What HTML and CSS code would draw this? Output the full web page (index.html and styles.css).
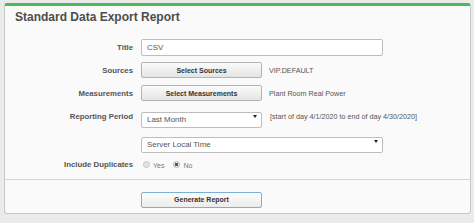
FILE: index.html
```html
<!DOCTYPE html>
<html>
<head>
<meta charset="utf-8">
<link rel="stylesheet" href="styles.css">
</head>
<body>
<div class="panel">
  <h1 class="panel-title">Standard Data Export Report</h1>
  <form class="form">
    <div class="field">
      <label class="label">Title</label>
      <input class="input input-wide" type="text" value="CSV">
    </div>
    <div class="field">
      <label class="label">Sources</label>
      <div class="control">
        <button type="button" class="btn">Select Sources</button>
        <span class="value">VIP.DEFAULT</span>
      </div>
    </div>
    <div class="field">
      <label class="label">Measurements</label>
      <div class="control">
        <button type="button" class="btn">Select Measurements</button>
        <span class="value">Plant Room Real Power</span>
      </div>
    </div>
    <div class="field">
      <label class="label">Reporting Period</label>
      <div class="control">
        <div class="select"><select><option>Last Month</option></select></div>
        <span class="value value-date">[start of day 4/1/2020 to end of day 4/30/2020]</span>
      </div>
    </div>
    <div class="field field-spaced">
      <span class="label"></span>
      <div class="select select-wide"><select><option>Server Local Time</option></select></div>
    </div>
    <div class="field">
      <label class="label">Include Duplicates</label>
      <div class="radios">
        <label class="radio"><input type="radio" name="dup"><span>Yes</span></label>
        <label class="radio"><input type="radio" name="dup" checked><span>No</span></label>
      </div>
    </div>
  </form>
  <div class="footer">
    <button type="button" class="btn btn-primary">Generate Report</button>
  </div>
</div>
</body>
</html>
```
FILE: styles.css
```css
html, body {
  margin: 0;
  padding: 0;
  background: #ebebeb;
  font-family: "Liberation Sans", Arial, sans-serif;
}

body {
  padding: 3px 3px 0 4px;
}

.panel {
  background: #fafafa;
  border: 1px solid #c8c8c8;
  border-top: 3px solid #4cb85a;
  border-radius: 3px;
  height: 207px;
  box-sizing: content-box;
}

.panel-title {
  margin: 0;
  padding: 4px 10px 0;
  font-size: 12px;
  line-height: 14px;
  font-weight: bold;
  color: #4d4d4d;
}

.form {
  display: flex;
  flex-direction: column;
  gap: 7px;
  margin-top: 15px;
  padding-bottom: 7px;
  border-bottom: 1px solid #d6d6d6;
}

.field {
  display: grid;
  grid-template-columns: 128px auto;
  column-gap: 8px;
  align-items: center;
  height: 16px;
}

.field-spaced {
  margin-top: 2px;
}

.label {
  text-align: right;
  font-size: 7.8px;
  font-weight: bold;
  color: #555;
}

.control {
  display: flex;
  align-items: center;
  gap: 7px;
}

.input {
  box-sizing: border-box;
  height: 17px;
  margin: 0;
  padding: 0 5px;
  border: 1px solid #bdbdbd;
  border-radius: 2px;
  background: #fff;
  font-family: inherit;
  font-size: 7.9px;
  color: #555;
  outline: none;
}

.input-wide {
  width: 242px;
}

.btn {
  box-sizing: border-box;
  width: 121px;
  height: 16px;
  margin: 0;
  padding: 0;
  border: 1px solid #b4b4b4;
  border-radius: 2px;
  background: linear-gradient(#fbfbfb, #e4e4e4);
  font-family: inherit;
  font-size: 7px;
  font-weight: bold;
  color: #333;
}

.btn-primary {
  border-color: #79b3d3;
  background: linear-gradient(#fdfdfd, #ececec);
}

.value {
  font-size: 7.2px;
  color: #555;
}

.value-date {
  margin-left: 1px;
}

.select {
  position: relative;
  width: 121px;
  height: 16px;
}

.select-wide {
  width: 242px;
}

.select select {
  appearance: none;
  -webkit-appearance: none;
  box-sizing: border-box;
  width: 100%;
  height: 16px;
  margin: 0;
  padding: 0 12px 0 5px;
  border: 1px solid #bdbdbd;
  border-radius: 2px;
  background: #fff;
  font-family: inherit;
  font-size: 7.9px;
  color: #555;
  outline: none;
}

.select::after {
  content: "";
  position: absolute;
  right: 5px;
  top: 7px;
  border-left: 2px solid transparent;
  border-right: 2px solid transparent;
  border-top: 3px solid #222;
  pointer-events: none;
}

.radios {
  display: flex;
  align-items: center;
  gap: 9px;
  padding-left: 2px;
}

.radio {
  display: flex;
  align-items: center;
  gap: 3px;
  font-size: 7px;
  color: #777;
}

.radio span {
  position: relative;
  top: 1px;
}

.radio input {
  appearance: none;
  -webkit-appearance: none;
  box-sizing: border-box;
  width: 7px;
  height: 7px;
  margin: 0;
  border: 1px solid #c4c4c4;
  border-radius: 50%;
  background: #e2e2e2;
}

.radio input:checked {
  background: radial-gradient(circle, #555 0 1.6px, #f2f2f2 2px);
  border-color: #aaa;
}

.footer {
  padding-top: 8px;
  padding-left: 136px;
}
```
